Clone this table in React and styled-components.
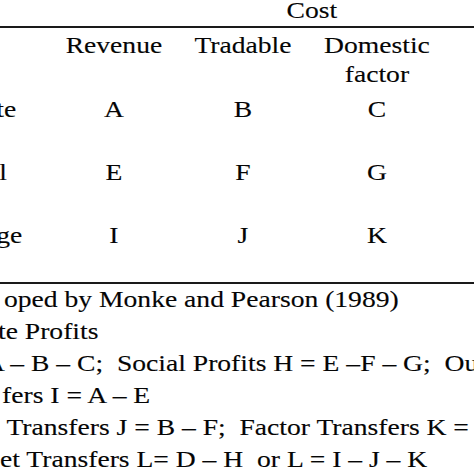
import React from 'react';
import styled, { createGlobalStyle } from 'styled-components';

const GlobalStyle = createGlobalStyle`
  html, body {
    margin: 0;
    padding: 0;
    background: #ffffff;
  }
`;

// the scanned table is a little wider than plain Times, so the page is stretched sideways
const STRETCH = 1.2;

const Frame = styled.div`
  width: 474px;
  height: 474px;
  overflow: hidden;
  background: #ffffff;
`;

const Page = styled.div`
  width: ${474 / STRETCH}px;
  transform: scaleX(${STRETCH});
  transform-origin: 0 0;
  color: #050505;
  font-family: "Liberation Serif", "Times New Roman", serif;
  font-size: 23px;
  -webkit-text-stroke: 0.12px #050505;
`;

const Table = styled.div`
  display: grid;
  grid-template-columns: 93.3px 106.7px 108.3px 115px 120px;
  margin: -4px 0 0 -51.7px;
  width: 543px;
`;

const GroupHead = styled.div`
  grid-column: 3 / 5;
  text-align: center;
  line-height: 30px;
`;

const Rule = styled.div`
  grid-column: 1 / -1;
  height: 2px;
  background: #1a1a1a;
`;

const HeadCell = styled.div`
  text-align: center;
  line-height: 29px;
  padding-top: 3px;
`;

const Cell = styled.div`
  text-align: ${(p) => (p.$label ? 'left' : 'center')};
  line-height: 29px;
  padding: 6px 0 ${(p) => (p.$last ? 32 : 28)}px;
  white-space: nowrap;
`;

const Notes = styled.div`
  line-height: 32px;
`;

const NoteLine = styled.div`
  white-space: pre;
  text-indent: ${(p) => p.$indent}px;
`;

const rows = [
  { label: 'Private', values: ['A', 'B', 'C'] },
  { label: 'Social', values: ['E', 'F', 'G'] },
  { label: 'Change', values: ['I', 'J', 'K'] },
];

const notes = [
  { text: 'oped by Monke and Pearson (1989)', indent: 3.3 },
  { text: 'te Profits', indent: -1.7 },
  { text: 'A \u2013 B \u2013 C;  Social Profits H = E \u2013F \u2013 G;  Output Transfers', indent: -12.5 },
  { text: 'fers I = A \u2013 E', indent: 1.7 },
  { text: ' Transfers J = B \u2013 F;  Factor Transfers K = G \u2013 C', indent: 0 },
  { text: 'et Transfers L= D \u2013 H  or L = I \u2013 J \u2013 K', indent: 0 },
];

const App = () => {
  return (
    <>
      <GlobalStyle />
      <Frame>
        <Page>
          <Table>
            <div />
            <div />
            <GroupHead>Cost</GroupHead>
            <div />
            <Rule />
            <div />
            <HeadCell>Revenue</HeadCell>
            <HeadCell>Tradable</HeadCell>
            <HeadCell>
              Domestic
              <br />
              factor
            </HeadCell>
            <div />
            {rows.map((row, i) => (
              <React.Fragment key={row.label}>
                <Cell $label $last={i === rows.length - 1}>
                  {row.label}
                </Cell>
                {row.values.map((v) => (
                  <Cell key={v} $last={i === rows.length - 1}>
                    {v}
                  </Cell>
                ))}
                <div />
              </React.Fragment>
            ))}
            <Rule />
          </Table>
          <Notes>
            {notes.map((n, i) => (
              <NoteLine key={i} $indent={n.indent}>
                {n.text}
              </NoteLine>
            ))}
          </Notes>
        </Page>
      </Frame>
    </>
  );
};

export default App;
